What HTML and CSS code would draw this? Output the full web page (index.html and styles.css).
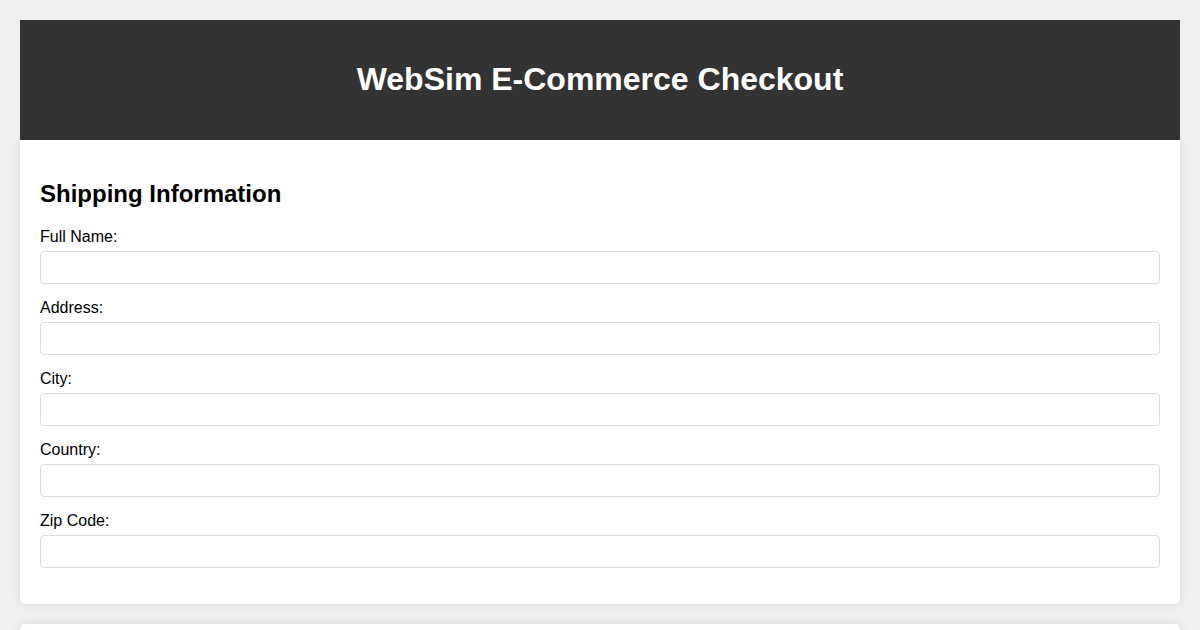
FILE: index.html
```html
<!DOCTYPE html>
<html lang="en">
<head>
<meta charset="utf-8">
<title>WebSim E-Commerce Checkout</title>
<link rel="stylesheet" href="styles.css">
</head>
<body>
<div class="container">
  <header class="site-header">
    <h1>WebSim E-Commerce Checkout</h1>
  </header>
  <section class="card card-first">
    <h2>Shipping Information</h2>
    <div class="form-group">
      <label for="name">Full Name:</label>
      <input type="text" id="name">
    </div>
    <div class="form-group">
      <label for="address">Address:</label>
      <input type="text" id="address">
    </div>
    <div class="form-group">
      <label for="city">City:</label>
      <input type="text" id="city">
    </div>
    <div class="form-group">
      <label for="country">Country:</label>
      <input type="text" id="country">
    </div>
    <div class="form-group">
      <label for="zip">Zip Code:</label>
      <input type="text" id="zip">
    </div>
  </section>
  <section class="card card-next"></section>
</div>
</body>
</html>
```
FILE: styles.css
```css
html, body {
  margin: 0;
  padding: 0;
}
body {
  background: #f0f0f0;
  font-family: "Liberation Sans", Arial, sans-serif;
  color: #000;
  padding: 20px;
}
.site-header {
  background: #333;
  color: #fff;
  padding: 20px;
  text-align: center;
}
.site-header h1 {
  margin: 21px 0 22px;
  font-size: 32px;
  line-height: 37px;
}
.card {
  background: #fff;
  padding: 20px 20px 21px;
  margin-bottom: 20px;
  border-radius: 5px;
  box-shadow: 0 0 10px rgba(0, 0, 0, 0.1);
}
.card-first {
  border-radius: 0 0 5px 5px;
}
.card-next {
  height: 200px;
}
.card h2 {
  font-size: 24px;
  line-height: 28px;
  margin: 20px 0;
}
.form-group {
  margin-bottom: 15px;
}
.form-group label {
  display: block;
  font-size: 16px;
  line-height: 18px;
  margin-bottom: 5px;
}
.form-group input {
  display: block;
  width: 100%;
  box-sizing: border-box;
  height: 33px;
  padding: 8px;
  border: 1px solid #ddd;
  border-radius: 4px;
  font-family: "Liberation Sans", Arial, sans-serif;
  font-size: 13px;
  background: #fff;
  margin: 0;
}
```
